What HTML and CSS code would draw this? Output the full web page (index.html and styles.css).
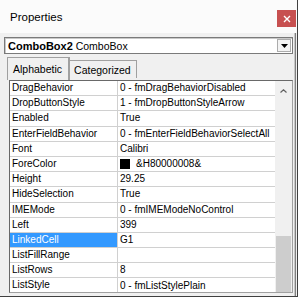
FILE: index.html
```html
<!DOCTYPE html>
<html lang="en">
<head>
    <meta charset="UTF-8">
    <meta name="viewport" content="width=device-width, initial-scale=1.0">
    <title>Properties</title>
    <link rel="stylesheet" href="styles.css">
</head>
<body>
    <div class="window">
        <div class="titlebar">
            <span class="title">Properties</span>
            <span class="close">
                <svg width="8" height="8" viewBox="0 0 8 8"><path d="M1 1 L7 7 M7 1 L1 7" stroke="#fff" stroke-width="1.4"/></svg>
            </span>
        </div>

        <div class="combo">
            <span class="combo-text"><b>ComboBox2</b> ComboBox</span>
            <span class="combo-btn">
                <svg width="7" height="4" viewBox="0 0 7 4"><path d="M0 0 H7 L3.5 4 Z" fill="#000"/></svg>
            </span>
        </div>

        <div class="tabs">
            <div class="tab active">Alphabetic</div>
            <div class="tab">Categorized</div>
        </div>

        <div class="panel">
            <div class="grid">
                <div class="row"><span class="name">DragBehavior</span><span class="value">0 - fmDragBehaviorDisabled</span></div>
                <div class="row"><span class="name">DropButtonStyle</span><span class="value">1 - fmDropButtonStyleArrow</span></div>
                <div class="row"><span class="name">Enabled</span><span class="value">True</span></div>
                <div class="row"><span class="name">EnterFieldBehavior</span><span class="value">0 - fmEnterFieldBehaviorSelectAll</span></div>
                <div class="row"><span class="name">Font</span><span class="value">Calibri</span></div>
                <div class="row"><span class="name">ForeColor</span><span class="value"><i class="swatch"></i>&amp;H80000008&amp;</span></div>
                <div class="row"><span class="name">Height</span><span class="value">29.25</span></div>
                <div class="row"><span class="name">HideSelection</span><span class="value">True</span></div>
                <div class="row"><span class="name">IMEMode</span><span class="value">0 - fmIMEModeNoControl</span></div>
                <div class="row"><span class="name">Left</span><span class="value">399</span></div>
                <div class="row selected"><span class="name">LinkedCell</span><span class="value">G1</span></div>
                <div class="row"><span class="name">ListFillRange</span><span class="value"></span></div>
                <div class="row"><span class="name">ListRows</span><span class="value">8</span></div>
                <div class="row"><span class="name">ListStyle</span><span class="value">0 - fmListStylePlain</span></div>
            </div>
            <div class="scrollbar">
                <span class="arrow">
                    <svg width="7" height="4" viewBox="0 0 7 4"><path d="M0.5 3.5 L3.5 0.8 L6.5 3.5" stroke="#606060" stroke-width="1.2" fill="none"/></svg>
                </span>
                <div class="thumb"></div>
            </div>
        </div>
    </div>
</body>
</html>
```

FILE: styles.css
```css
body { margin: 0; padding: 0; background: #fff; font-family: "Liberation Sans", Arial, sans-serif; color: #000; }

.window {
    width: 298px;
    height: 297px;
    box-sizing: border-box;
    background: #f0f0f0;
    border-right: 1px solid #404040;
    border-bottom: 1px solid #404040;
    box-shadow: inset -1px 0 0 #f0f0f0, inset -2px 0 0 #808080, inset -3px 0 0 #c8c8c8;
    display: flex;
    flex-direction: column;
}

.titlebar {
    height: 33px;
    flex: none;
    background: #fbfbfb;
    display: flex;
    justify-content: space-between;
    align-items: flex-start;
}
.title { font-size: 11.5px; margin: 11px 0 0 10px; }
.close {
    width: 19px;
    height: 17px;
    margin: 10px 1px 0 0;
    background: #c75050;
    display: flex;
    justify-content: center;
    align-items: center;
}

.combo {
    margin: 4px 4px 0 4px;
    height: 17px;
    flex: none;
    box-sizing: border-box;
    border: 1px solid #7a7a7a;
    box-shadow: inset 1px 1px 0 #c8c8c8;
    background: #fff;
    display: flex;
    justify-content: space-between;
    align-items: center;
}
.combo-text { font-size: 10.5px; padding-left: 3px; }
.combo-text b { font-size: 11px; }
.combo-btn {
    width: 14px;
    height: 13px;
    margin-right: 1px;
    box-sizing: border-box;
    border: 1px solid #acacac;
    background: #f4f4f4;
    display: flex;
    justify-content: center;
    align-items: center;
}

.tabs {
    height: 23px;
    margin: 3px 0 0 7px;
    flex: none;
    display: flex;
    align-items: flex-end;
}
.tab {
    font-size: 10.5px;
    height: 18px;
    box-sizing: border-box;
    padding: 3px 5px 0 4px;
    border: 1px solid #a0a0a0;
    border-bottom: none;
    border-left: none;
    margin-bottom: 2px;
}
.tab.active {
    height: 23px;
    margin-bottom: 0;
    padding: 5px 6px 0 5px;
    border-left: 1px solid #a0a0a0;
    border-right: 2px solid #a0a0a0;
}

.panel {
    margin-left: 9px;
    width: 284px;
    height: 213px;
    box-sizing: border-box;
    border-top: 1px solid #696969;
    border-left: 1px solid #696969;
    border-right: 1px solid #a0a0a0;
    border-bottom: 1px solid #a0a0a0;
    display: flex;
    overflow: hidden;
}

.grid { flex: 1; background: #fff; font-size: 10px; }
.row {
    display: grid;
    grid-template-columns: 108px 1fr;
    height: 15.2px;
    box-sizing: border-box;
    border-bottom: 1px solid #d0d0d0;
}
.name, .value { padding-left: 2px; line-height: 14px; white-space: nowrap; overflow: hidden; }
.name { border-right: 1px solid #d0d0d0; }
.value { display: flex; align-items: center; }
.selected .name { background: #3399ff; color: #fff; }
.swatch { width: 10px; height: 10px; background: #000; margin-right: 6px; }

.scrollbar {
    width: 17px;
    flex: none;
    background: #f0f0f0;
    display: flex;
    flex-direction: column;
    align-items: center;
}
.arrow { height: 14px; display: flex; align-items: center; margin-top: 3px; }
.thumb { width: 15px; height: 56px; margin-top: auto; background: #cdcdcd; }
```
